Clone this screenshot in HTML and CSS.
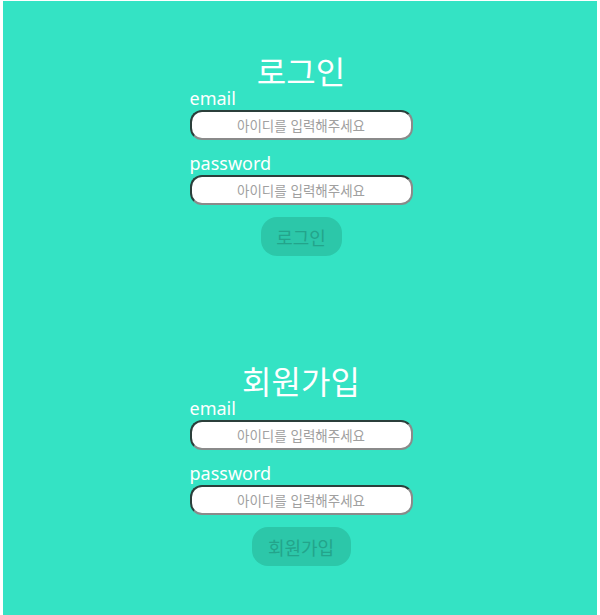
FILE: index.html
```html
<!DOCTYPE html>
<html lang="ko">
<head>
    <meta charset="UTF-8">
    <meta name="viewport" content="width=device-width, initial-scale=1.0">
    <title>로그인</title>
    <link rel="stylesheet" href="styles.css">
</head>
<body>
    <div class="page">

    <section class="form-box">
        <h2>로그인</h2>
        <label for="loginEmail">email</label>
        <input type="text" id="loginEmail" placeholder="아이디를 입력해주세요">
        <label for="loginPw" class="second">password</label>
        <input type="password" id="loginPw" placeholder="아이디를 입력해주세요">
        <button class="btn btn-login">로그인</button>
    </section>

    <section class="form-box signup">
        <h2>회원가입</h2>
        <label for="joinEmail">email</label>
        <input type="text" id="joinEmail" placeholder="아이디를 입력해주세요">
        <label for="joinPw" class="second">password</label>
        <input type="password" id="joinPw" placeholder="아이디를 입력해주세요">
        <button class="btn btn-join">회원가입</button>
    </section>

    </div>
</body>
</html>
```

FILE: styles.css
```css
html, body {
    margin: 0;
    padding: 0;
    background: #fff;
    font-family: "Noto Sans", "Noto Sans CJK KR", sans-serif;
}
.page {
    margin: 1px 3px 0 3px;
    height: 614px;
    box-sizing: border-box;
    padding: 51px 0 0 2px;
    background: #34e3c4;
    overflow: hidden;
}
.form-box {
    width: 223px;
    margin: 0 auto;
    display: flex;
    flex-direction: column;
}
.form-box.signup {
    margin-top: 106px;
}
h2 {
    margin: 0;
    color: #fff;
    font-family: "Noto Sans CJK KR", sans-serif;
    font-weight: 400;
    font-size: 32px;
    line-height: 36px;
    text-align: center;
}
label {
    color: #fff;
    font-size: 18px;
    line-height: 20px;
}
label.second {
    margin-top: 13px;
}
input {
    margin-top: 2px;
    height: 30px;
    box-sizing: border-box;
    border: 2px solid;
    border-color: #2b3f3b #8a8a8a #8a8a8a #2b3f3b;
    border-radius: 12px;
    background: #fff;
    text-align: center;
    font-family: "Noto Sans CJK KR", sans-serif;
    font-size: 13.5px;
    padding: 0 10px;
    outline: none;
}
input::placeholder {
    color: #a0a0a0;
}
.btn {
    align-self: center;
    margin-top: 12px;
    height: 39px;
    border: none;
    border-radius: 16px;
    background: #2cc7a9;
    color: #23a48b;
    font-family: "Noto Sans CJK KR", sans-serif;
    font-size: 18px;
    padding: 0;
    cursor: pointer;
}
.btn-login {
    width: 81px;
}
.btn-join {
    width: 99px;
}
```
